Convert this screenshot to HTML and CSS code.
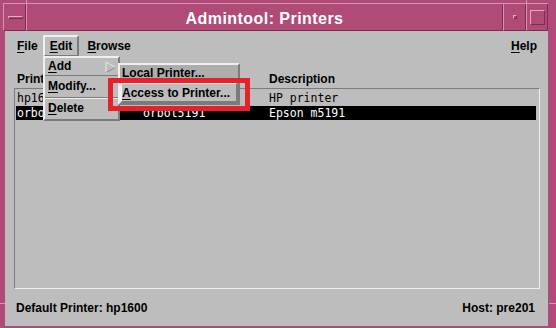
FILE: index.html
```html
<!DOCTYPE html>
<html lang="en">
<head>
  <meta charset="UTF-8">
  <title>Admintool: Printers</title>
  <link rel="stylesheet" href="styles.css">
</head>
<body>
  <div class="window">
    <!--frame corner marks-->
    <span class="notch notch-tl"></span>
    <span class="notch notch-tr"></span>
    <span class="notch notch-bl"></span>
    <span class="notch notch-br"></span>

    <div class="titlebar">
      <div class="tb-cell tb-menu"><span class="tb-bar"></span></div>
      <div class="tb-cell tb-title">Admintool: Printers</div>
      <div class="tb-cell tb-min"><span class="tb-dot"></span></div>
      <div class="tb-cell tb-max"><span class="tb-box"></span></div>
    </div>

    <div class="client">
      <div class="menubar">
        <span class="mb-item mb-file"><span class="mn">F</span>ile</span>
        <span class="mb-item mb-open"><span class="mn">E</span>dit</span>
        <span class="mb-item mb-browse"><span class="mn">B</span>rowse</span>
        <span class="mb-spacer"></span>
        <span class="mb-item"><span class="mn">H</span>elp</span>
      </div>

      <div class="headers">
        <span>Printer Name</span>
        <span>Print Server</span>
        <span>Description</span>
      </div>

      <div class="list">
        <div class="row">
          <span>hp1600</span>
          <span>pre201</span>
          <span>HP printer</span>
        </div>
        <div class="row selected">
          <span>orbot5191</span>
          <span>orbot5191</span>
          <span>Epson m5191</span>
        </div>
      </div>

      <div class="status">
        <span>Default Printer: hp1600</span>
        <span>Host: pre201</span>
      </div>
    </div>

    <!--open Edit menu-->
    <div class="popup edit-menu">
      <div class="mitem armed">
        <span class="mn">A</span>dd
        <svg class="cascade-arrow" width="11" height="12" viewBox="0 0 11 12">
          <polygon points="1,1 10,6 1,11" fill="none" stroke="#e9e9e9" stroke-width="1"/>
          <line x1="1.5" y1="11" x2="10" y2="6.5" stroke="#7b7b7b" stroke-width="1"/>
        </svg>
      </div>
      <div class="mitem"><span class="mn">M</span>odify...</div>
      <div class="msep"></div>
      <div class="mitem"><span class="mn">D</span>elete</div>
    </div>

    <div class="popup add-menu">
      <div class="mitem local">Local Printer...</div>
      <div class="mitem access"><span class="mn">A</span>ccess to Printer...</div>
    </div>

    <div class="callout"></div>
  </div>
</body>
</html>
```

FILE: styles.css
```css
body {
  margin: 0;
  font-family: "Liberation Sans", Arial, sans-serif;
}

.window {
  position: relative;
  width: 556px;
  height: 328px;
  box-sizing: border-box;
  padding: 3px 8px 2px 3px;
  background: #b04b77;
  display: flex;
  flex-direction: column;
}

.notch {
  position: absolute;
  background: #d993b2;
}
.notch-tl { left: 26px; top: 0; width: 1px; height: 3px; }
.notch-tr { left: 526px; top: 0; width: 1px; height: 3px; }
.notch-bl { left: 0; top: 303px; width: 5px; height: 1px; }
.notch-br { left: 549px; top: 303px; width: 7px; height: 1px; }

/* title bar */
.titlebar {
  display: flex;
  height: 28px;
  box-sizing: border-box;
  border-top: 1px solid #d993b2;
}
.tb-cell {
  box-sizing: border-box;
  height: 27px;
  border-left: 1px solid #d993b2;
  border-right: 1px solid #7d2c50;
  border-bottom: 1px solid #7d2c50;
  display: flex;
  align-items: center;
  justify-content: center;
}
.tb-menu { width: 23px; }
.tb-min { width: 23px; }
.tb-max { width: 22px; }
.tb-title {
  flex: 1;
  color: #fff;
  font-size: 16px;
  font-weight: bold;
  letter-spacing: 0.45px;
  align-items: flex-start;
  padding-top: 5px;
  line-height: 20px;
}
.tb-bar {
  width: 15px;
  height: 3px;
  box-sizing: border-box;
  border: 1px solid;
  border-color: #e3a9c2 #7d2c50 #7d2c50 #e3a9c2;
  margin-left: 2px;
}
.tb-dot {
  width: 4px;
  height: 4px;
  box-sizing: border-box;
  border: 1px solid;
  border-color: #e3a9c2 #7d2c50 #7d2c50 #e3a9c2;
}
.tb-box {
  width: 15px;
  height: 15px;
  box-sizing: border-box;
  border: 1px solid;
  border-color: #e3a9c2 #7d2c50 #7d2c50 #e3a9c2;
}

/* window body */
.client {
  flex: 1;
  margin-left: 2px;
  background: #bdbdbd;
  display: flex;
  flex-direction: column;
  font-size: 12px;
  font-weight: bold;
  color: #000;
}

.mn {
  text-decoration: underline;
  text-underline-offset: 2px;
}

.menubar {
  display: flex;
  height: 26px;
  box-sizing: border-box;
  padding: 4px 4px 0 5px;
}
.mb-item {
  border: 2px solid transparent;
  padding: 0 5px;
  line-height: 18px;
}
.mb-file { margin-right: -2px; }
.mb-browse { margin-left: 1px; }
.mb-open {
  border-color: #efefef #7b7b7b #7b7b7b #efefef;
}
.mb-spacer { flex: 1; }

.headers {
  display: grid;
  grid-template-columns: 126px 126px 1fr;
  margin-top: 14px;
  padding-left: 12px;
  line-height: 16px;
  white-space: nowrap;
}

.list {
  height: 201px;
  box-sizing: border-box;
  margin: 1px 8px 0 9px;
  padding-top: 2px;
  border: 1px solid;
  border-color: #7c7c7c #f0f0f0 #f0f0f0 #7c7c7c;
  font-family: "DejaVu Sans Mono", "Liberation Mono", monospace;
  font-size: 11.5px;
  font-weight: normal;
}
.row {
  display: grid;
  grid-template-columns: 126px 126px 1fr;
  height: 14px;
  line-height: 14px;
  margin: 0 3px 1px 1px;
  padding-left: 1px;
  white-space: nowrap;
}
.row.selected {
  background: #000;
  color: #fff;
}

.status {
  flex: 1;
  display: flex;
  justify-content: space-between;
  align-items: center;
  padding: 0 13px 0 11px;
  line-height: 16px;
}

/* pulled-down menus */
.popup {
  position: absolute;
  box-sizing: border-box;
  background: #bdbdbd;
  border: 2px solid;
  border-color: #efefef #7b7b7b #7b7b7b #efefef;
  font-size: 12px;
  font-weight: bold;
  white-space: nowrap;
}
.mitem {
  position: relative;
  height: 16px;
  line-height: 16px;
  padding: 0 3px;
}

.edit-menu {
  left: 43px;
  top: 56px;
  width: 77px;
  height: 65px;
}
.edit-menu .mitem { margin-bottom: 4px; }
.edit-menu .armed {
  height: 18px;
  margin-bottom: 2px;
  box-shadow: inset 0 -1px #7b7b7b;
}
.cascade-arrow {
  position: absolute;
  right: 2px;
  top: 3px;
}
.msep {
  height: 0;
  margin: -1px 0 1px;
  border-top: 1px solid #7b7b7b;
  border-bottom: 1px solid #efefef;
}

.add-menu {
  left: 118px;
  top: 63px;
  width: 122px;
  height: 42px;
}
.add-menu .local {
  height: 17px;
  padding-left: 2px;
  background: #adadad;
}
.add-menu .access {
  height: 21px;
  box-sizing: border-box;
  padding: 1px 0 0 0;
  border: 2px solid;
  border-color: #efefef #7b7b7b #7b7b7b #efefef;
}

.callout {
  position: absolute;
  left: 108px;
  top: 78px;
  width: 142px;
  height: 33px;
  box-sizing: border-box;
  border: 5px solid #e5212b;
}
```
